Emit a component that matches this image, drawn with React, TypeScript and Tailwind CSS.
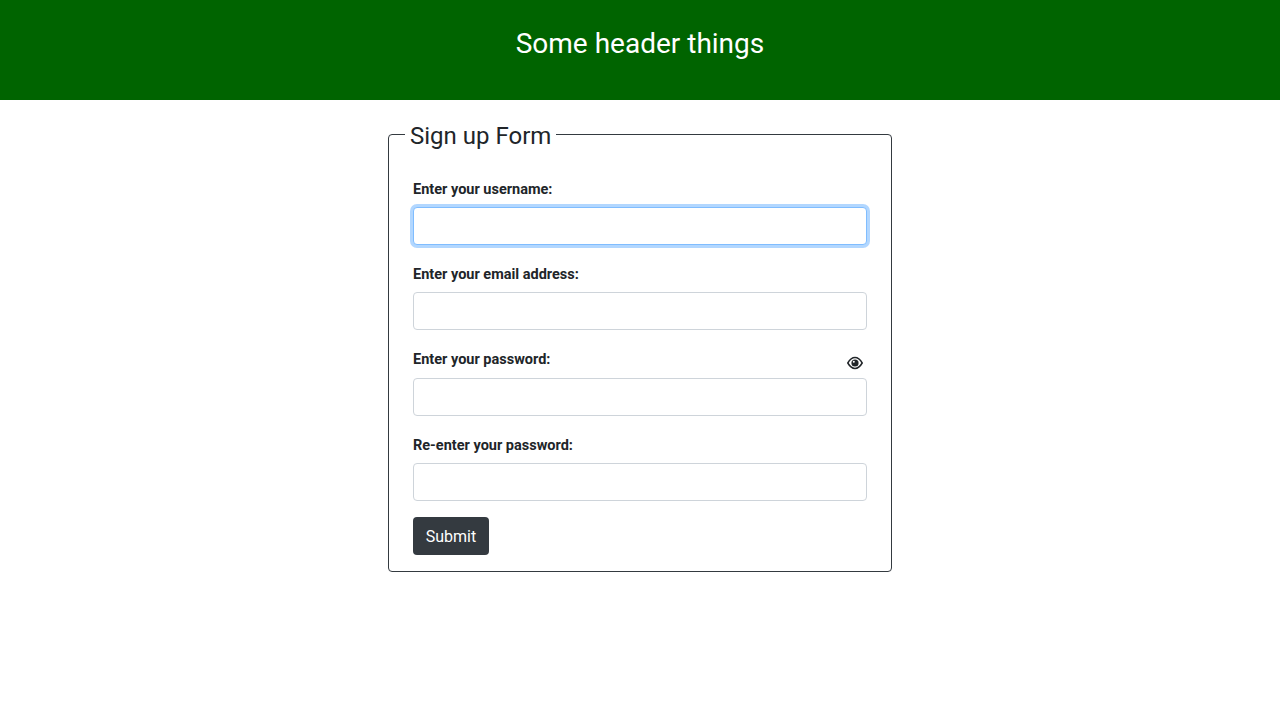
function EyeIcon() {
  return (
    <svg viewBox="0 0 16 14" className="absolute right-[4px] top-[9px] h-[14px] w-[16px] text-[#212529]">
      <path
        d="M0.8 7C3 3.2 5.5 1.6 8 1.6S13 3.2 15.2 7C13 10.8 10.5 12.4 8 12.4S3 10.8 0.8 7Z"
        fill="none"
        stroke="currentColor"
        strokeWidth="1.5"
      />
      <circle cx="8" cy="7" r="3.6" fill="currentColor" />
      <circle cx="6.8" cy="5.7" r="1" fill="#fff" />
    </svg>
  );
}

function Field({ label, focused, eye, last }: { label: string; focused?: boolean; eye?: boolean; last?: boolean }) {
  return (
    <div className={last ? "mb-[16px]" : "mb-[17px]"}>
      <div className={eye ? "relative mb-[6px] flex h-[25px] items-start" : "mb-[6px] flex h-[24px] items-start"}>
        <label className="text-[14.5px] font-bold leading-[26px] text-[#212529]">{label}</label>
        {eye && <EyeIcon />}
      </div>
      <input
        type="text"
        className={
          focused
            ? "block h-[38px] w-full rounded-[4px] border border-[#80bdff] bg-white outline-none shadow-[0_0_0_3px_rgba(0,123,255,0.3)]"
            : "block h-[38px] w-full rounded-[4px] border border-[#ced4da] bg-white outline-none"
        }
      />
    </div>
  );
}

export default function App() {
  return (
    <div className="min-h-screen bg-white font-['Roboto','Noto_Sans',sans-serif] text-[#212529]">
      <header className="h-[100px] bg-[#006400] pt-[23px] text-center text-[28px] leading-[42px] text-white">
        Some header things
      </header>
      <main className="flex justify-center pt-[19px]">
        <fieldset className="w-[504px] rounded-[4px] border border-[#343a40] px-[24px] pb-[16px] pt-[28px]">
          <legend className="ml-[-8px] px-[5px] pt-[4px] text-[24px] leading-[26px]">Sign up Form</legend>
          <Field label="Enter your username:" focused />
          <Field label="Enter your email address:" />
          <Field label="Enter your password:" eye />
          <Field label="Re-enter your password:" last />
          <button className="block h-[38px] w-[76px] rounded-[4px] bg-[#343a40] pt-[1px] text-[16px] text-white">Submit</button>
        </fieldset>
      </main>
    </div>
  );
}
